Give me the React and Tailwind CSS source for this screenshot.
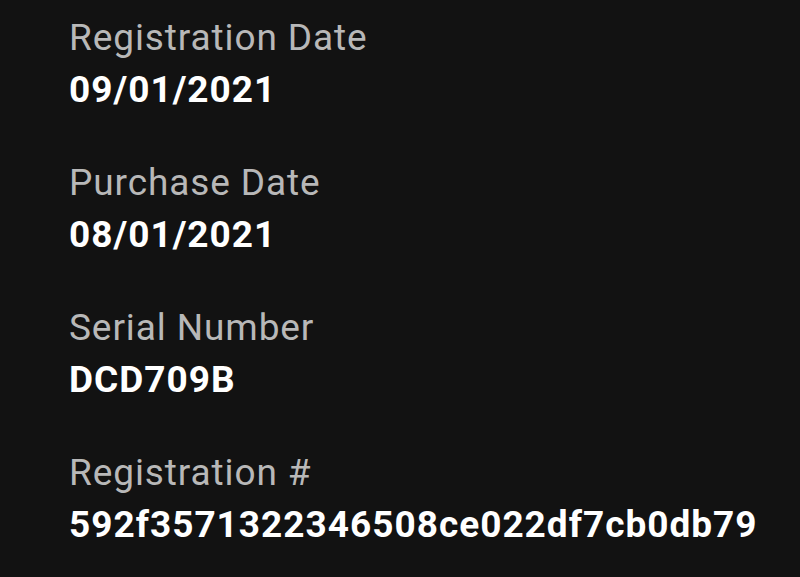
const fields = [
  { label: "Registration Date", value: "09/01/2021" },
  { label: "Purchase Date", value: "08/01/2021" },
  { label: "Serial Number", value: "DCD709B" },
  { label: "Registration #", value: "592f3571322346508ce022df7cb0db79" },
];

export default function App() {
  return (
    <div
      className="h-[577px] w-[800px] overflow-hidden bg-[#121212] pl-[69px] pt-[12px]"
      style={{ fontFamily: "Roboto, sans-serif" }}
    >
      <div className="flex flex-col gap-[41px]">
        {fields.map((f) => (
          <div key={f.label} className="flex flex-col">
            <span className="text-[37px] leading-[52px] tracking-[0.9px] text-[#b8b8b8]">
              {f.label}
            </span>
            <span className="text-[37px] font-bold leading-[52px] tracking-[1px] text-white">
              {f.value}
            </span>
          </div>
        ))}
      </div>
    </div>
  );
}
